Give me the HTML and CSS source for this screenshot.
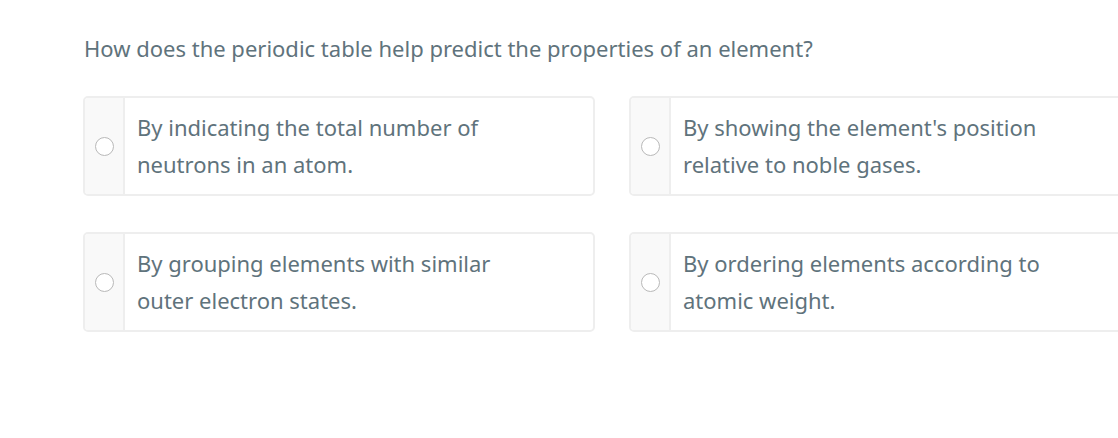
FILE: index.html
```html
<!DOCTYPE html>
<html>

<head>
	<title>Quiz</title>
	<link rel="stylesheet" href="styles.css">
</head>

<body>
	<div class="quiz">
		<p class="question">How does the periodic table help predict the properties of an element?</p>

		<div class="options">
			<label class="option">
				<span class="option-mark"><span class="radio"></span></span>
				<span class="option-text">By indicating the total number of neutrons in an atom.</span>
			</label>

			<label class="option">
				<span class="option-mark"><span class="radio"></span></span>
				<span class="option-text">By showing the element's position relative to noble gases.</span>
			</label>

			<label class="option">
				<span class="option-mark"><span class="radio"></span></span>
				<span class="option-text">By grouping elements with similar outer electron states.</span>
			</label>

			<label class="option">
				<span class="option-mark"><span class="radio"></span></span>
				<span class="option-text">By ordering elements according to atomic weight.</span>
			</label>
		</div>
	</div>
</body>

</html>
```

FILE: styles.css
```css
body {
	margin: 0;
	padding: 0;
	background-color: white;
	color: #5f737c;
	font-family: "Noto Sans", sans-serif;
	overflow: hidden;
}

.quiz {
	padding: 30px 0 0 83px;
	width: 1058px;
}

.question {
	margin: 0 0 30px 1px;
	font-size: 22px;
	line-height: 36px;
}

.options {
	display: grid;
	grid-template-columns: 512px 512px;
	column-gap: 34px;
	row-gap: 36px;
}

.option {
	display: flex;
	border: 2px solid #eeeeee;
	border-radius: 5px;
	overflow: hidden;
	cursor: pointer;
}

.option-mark {
	width: 38px;
	flex-shrink: 0;
	background-color: #f9f9f9;
	border-right: 2px solid #eeeeee;
	display: flex;
	align-items: center;
	justify-content: center;
}

.radio {
	width: 17px;
	height: 17px;
	border: 1px solid #b9b9b9;
	border-radius: 50%;
	background-color: white;
}

.option-text {
	padding: 11px 76px 11px 12px;
	font-size: 22px;
	line-height: 37px;
}
```
